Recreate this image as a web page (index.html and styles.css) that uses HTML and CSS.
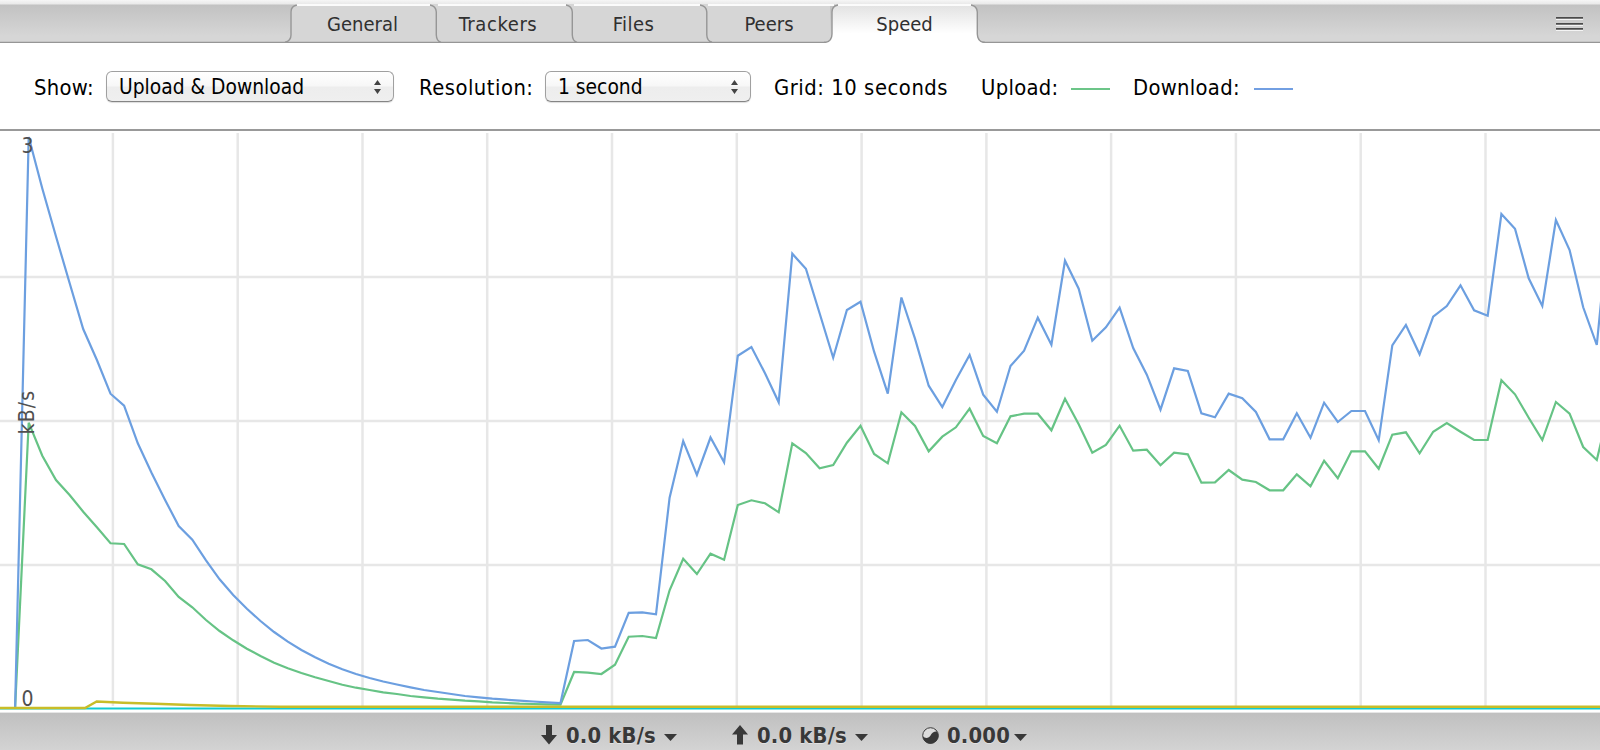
FILE: index.html
```html
<!DOCTYPE html>
<html>

<head>
    <meta charset="utf-8">
    <title>Speed</title>
    <link rel="stylesheet" href="styles.css">
</head>

<body>
    <div class="tab-bar">
        <svg class="tab-shapes" width="1600" height="43" viewBox="0 0 1600 43">
            <defs>
                <linearGradient id="activeTab" x1="0" y1="0" x2="0" y2="1">
                    <stop offset="0" stop-color="#e2e2e2" />
                    <stop offset="0.75" stop-color="#ffffff" />
                </linearGradient>
            </defs>
            <path class="tab-fill" d="M285 42 Q290.500 42 290.500 36 V12 Q290.500 5 298 5 H830 V42 Z" />
            <path class="tab-shine" d="M296 5 H430 M438 5 H566 M574 5 H700 M708 5 H834" />
            <path class="tab-line" d="M285 42.300 Q291 41 291 35 V12 Q291 6 297 5" />
            <path class="tab-line" d="M430 5 Q436 6 436.300 12 V35 Q436.500 41 441 42.300" />
            <path class="tab-line" d="M566 5 Q572 6 572.300 12 V35 Q572.500 41 577 42.300" />
            <path class="tab-line" d="M700 5 Q706.500 6 706.800 12 V35 Q707 41 712 42.300" />
            <path class="tab-line" d="M0 42.500 H825 M982 42.500 H1600" />
            <path fill="url(#activeTab)" d="M825 43 Q832 41.500 832 35 V12 Q832 5 839 5 H970 Q977 5 977 12 V35 Q977 41.500 984 43 Z" />
            <path class="tab-shine" d="M838 5 H971" />
            <path class="tab-line" d="M824 42.500 Q832 42 832 34 V12 Q832 6 838 5 M971 5 Q977 6 977.300 12 V34 Q977.500 42 985 42.500" />
        </svg>
        <div class="tabs">
            <div class="tab general">General</div>
            <div class="tab trackers">Trackers</div>
            <div class="tab files">Files</div>
            <div class="tab peers">Peers</div>
            <div class="tab speed">Speed</div>
        </div>
        <div class="menu-button">
            <span></span><span></span><span></span>
        </div>
    </div>

    <div class="controls">
        <label class="show">Show:</label>
        <div class="select show-select">
            <span>Upload &amp; Download</span>
            <svg width="9" height="14" viewBox="0 0 8 14"><path d="M4 0 L7.500 5 H0.500 Z M0.500 9 H7.500 L4 14 Z" /></svg>
        </div>
        <label class="resolution">Resolution:</label>
        <div class="select resolution-select">
            <span>1 second</span>
            <svg width="9" height="14" viewBox="0 0 8 14"><path d="M4 0 L7.500 5 H0.500 Z M0.500 9 H7.500 L4 14 Z" /></svg>
        </div>
        <label class="grid-label">Grid: 10 seconds</label>
        <label class="upload-label">Upload:</label>
        <div class="legend upload"></div>
        <label class="download-label">Download:</label>
        <div class="legend download"></div>
    </div>

    <div class="graph">
        <svg id="graph" width="1600" height="581" viewBox="0 131 1600 581">
            <g id="grid"></g>
            <polyline class="line upload-line" id="uploadLine" />
            <polyline class="line download-line" id="downloadLine" />
            <path class="overhead-down" d="M0 708.500 H1600" />
            <path class="overhead-up" d="M0 708 H85 L96.700 701.500 L123 702.700 L155 703.800 L190 705 L230 706 L280 706.700 H1600" />
            <text class="axis" x="21.500" y="153">3</text>
            <text class="axis" x="21.500" y="705.500">0</text>
            <text class="axis unit" transform="translate(33.500 434.500) rotate(-90)">kB/s</text>
        </svg>
    </div>

    <div class="status-bar">
        <svg class="arrow" width="16" height="20" viewBox="0 0 16 20"><path d="M5 0 H11 V10 H16 L8 19.500 L0 10 H5 Z" /></svg>
        <span class="rate">0.0 kB/s</span>
        <svg class="caret" width="13" height="7" viewBox="0 0 13 7"><path d="M0 0 H13 L6.500 7 Z" /></svg>

        <svg class="arrow second" width="16" height="20" viewBox="0 0 16 20"><path d="M8 0 L16 9.500 H11 V19.500 H5 V9.500 H0 Z" /></svg>
        <span class="rate">0.0 kB/s</span>
        <svg class="caret" width="13" height="7" viewBox="0 0 13 7"><path d="M0 0 H13 L6.500 7 Z" /></svg>

        <svg class="ratio-icon" width="17" height="17" viewBox="0 0 17 17">
            <circle cx="8.500" cy="8.500" r="7.800" fill="#dcdcdc" stroke="#3c3c3c" />
            <path d="M15 4.500 A7.800 7.800 0 1 1 0.800 9.500 C3 11.500 7 11.500 8.500 8.500 C10 5.500 12.500 4 15 4.500 Z" />
        </svg>
        <span class="ratio">0.000</span>
        <svg class="caret" width="13" height="7" viewBox="0 0 13 7"><path d="M0 0 H13 L6.500 7 Z" /></svg>
    </div>

    <script>
        // one sample per second
        var STEP = 13.636;
        var START = 15.06;

        var download = [
            708, 137, 188.5, 236.5, 283, 329, 360, 393.7, 405.7, 443.3, 472.5, 500, 526, 539.7, 560.3, 579.3, 595, 608.7, 621, 632,
            641.7, 650, 657.3, 663.7, 669.3, 674, 678, 681.5, 684.5, 687.3, 690, 692, 694, 696, 697.3, 698.7, 699.7, 700.7, 701.5, 702.3,
            703, 641, 640, 648.5, 646.7, 612.9, 612.3, 614.3, 497.7, 441, 475, 437.5, 462.3, 355.7, 347, 373.3, 402.3, 253.7, 268.7, 313.3,
            357.7, 310, 301.7, 351.7, 393.7, 297.5, 338.7, 385.7, 407, 380, 355, 394.7, 411.7, 366, 350.7, 317.7, 344.7, 260.7, 288.7, 340.7,
            327.3, 307.7, 348, 374.7, 409.7, 368.3, 371, 413.3, 417.3, 393.7, 398.3, 412, 439.3, 439.3, 413.3, 437.7, 402.7, 422, 411, 411,
            440.3, 345.3, 325, 354.3, 316.7, 306, 285.3, 310.3, 315.7, 214, 228.7, 278.3, 306, 220, 250, 307.3, 345, 205
        ];

        var upload = [
            708, 422.7, 455.7, 480, 495, 511.7, 527.3, 543.3, 544, 564.3, 569.3, 581, 597, 607.3, 620, 631, 640.3, 648.7, 656, 662.7,
            668.3, 673, 677.3, 681, 684.7, 687.7, 690, 692.3, 694, 696, 697.3, 698.7, 699.7, 700.7, 701.3, 702.3, 703, 703.7, 704, 704.3,
            704.7, 672, 672.7, 674, 664.7, 636.7, 636, 638, 590.3, 558.7, 574, 553.7, 559.7, 505, 500.3, 503.3, 512.3, 443.3, 453, 468.3,
            465, 442.7, 425.7, 454, 463.3, 412.3, 426, 451.3, 436.7, 427.3, 408.7, 436, 443.3, 416.3, 413.7, 413.7, 430.3, 398.7, 424.3, 452.7,
            445, 425.7, 450.7, 449.7, 465.3, 452.7, 454.3, 482.7, 482.3, 470, 479.7, 482, 490.3, 490.3, 474.3, 486.3, 460.7, 478.3, 451.3, 451.3,
            468.7, 434.7, 432.3, 453.3, 431.7, 423, 431.7, 440, 440, 380.3, 394.3, 417.7, 440, 402, 413.7, 447, 460, 402
        ];

        function drawLine(id, values) {
            var points = values.map(function (y, i) {
                return (START + i * STEP).toFixed(1) + "," + y;
            });
            document.getElementById(id).setAttribute("points", points.join(" "));
        }

        function drawGrid() {
            var d = "";
            for (var i = 0; i < 12; i++) {
                d += "M" + (112.9 + i * 124.78).toFixed(1) + " 133 V706 ";
            }
            d += "M0 277 H1600 M0 421 H1600 M0 565 H1600";
            var path = document.createElementNS("http://www.w3.org/2000/svg", "path");
            path.setAttribute("d", d);
            document.getElementById("grid").appendChild(path);
        }

        drawGrid();
        drawLine("uploadLine", upload);
        drawLine("downloadLine", download);
    </script>
</body>

</html>
```
FILE: styles.css
```css
* {
    box-sizing: border-box;
}

body {
    margin: 0;
    width: 1600px;
    height: 750px;
    overflow: hidden;
    background: #fff;
    font-family: "DejaVu Sans Condensed", "DejaVu Sans", sans-serif;
    font-stretch: condensed;
    font-size: 21.8px;
    color: #000;
}

.tab-bar {
    position: relative;
    display: flex;
    justify-content: space-between;
    height: 43px;
    background: linear-gradient(#f6f6f6 0, #e9e9e9 4px, #c2c2c2 5px, #d6d6d6 36px);
}

.tab-shapes {
    position: absolute;
    left: 0;
    top: 0;
}

.tab-fill {
    fill: #d6d6d6;
}

.tab-line {
    fill: none;
    stroke: #969696;
    stroke-width: 1.4;
}

.tab-shine {
    fill: none;
    stroke: #fbfbfb;
    stroke-width: 2;
}

.tabs {
    position: relative;
    display: flex;
    padding-left: 290px;
}

.tab {
    padding-top: 6px;
    font-size: 20px;
    line-height: 37px;
    text-align: center;
    color: #303030;
}

.general {
    width: 145px;
}

.trackers {
    width: 126px;
    letter-spacing: 0.6px;
}

.files {
    width: 145px;
    letter-spacing: 0.4px;
}

.peers {
    width: 126px;
}

.speed {
    width: 145px;
}

.menu-button {
    display: flex;
    flex-direction: column;
    gap: 3.500px;
    width: 27px;
    margin: 17px 17px 0 0;
}

.menu-button span {
    height: 2px;
    border-top: 1px solid #4a4a4a;
    border-bottom: 1px solid #777;
    box-shadow: 0 1px 0 #f4f4f4;
}

.controls {
    display: flex;
    align-items: center;
    height: 88px;
    padding-left: 34px;
    border-bottom: 2px solid #999;
    white-space: nowrap;
}

.controls label {
    padding-top: 3px;
    letter-spacing: 0.3px;
}

.show {
    width: 72px;
}

.resolution {
    width: 125px;
}

.controls .resolution {
    letter-spacing: 0.5px;
}

.grid-label {
    width: 207px;
}

.controls .grid-label {
    letter-spacing: 0.55px;
}

.upload-label {
    width: 90px;
}

.download-label {
    width: 121px;
}

.select {
    display: flex;
    align-items: center;
    justify-content: space-between;
    height: 31px;
    margin-top: 1px;
    padding: 1px 11px 0 12px;
    border: 1px solid #a0a0a0;
    border-bottom-color: #858585;
    border-radius: 6px;
    background: linear-gradient(#fff 0, #f7f7f7 48%, #ededed 52%, #efefef 100%);
    box-shadow: 0 1px 1px #ddd;
    font-size: 20.800px;
}

.select svg {
    fill: #444;
}

.show-select {
    width: 288px;
    margin-right: 25px;
}

.resolution-select {
    width: 206px;
    margin-left: 1px;
    margin-right: 23px;
}

.legend {
    width: 39px;
    height: 2px;
    margin-top: 5px;
}

.upload {
    margin-right: 23px;
    background: #6cc588;
}

.download {
    background: #729fe2;
}

.graph {
    height: 581px;
}

.graph svg {
    display: block;
}

#grid path {
    stroke: #e7e7e7;
    stroke-width: 2.500;
}

.line {
    fill: none;
    stroke-width: 2.2;
}

.upload-line {
    stroke: #66c385;
}

.download-line {
    stroke: #6c9fe0;
}

.overhead-down {
    fill: none;
    stroke: #10cbd0;
    stroke-width: 2;
}

.overhead-up {
    fill: none;
    stroke: #c8bd28;
    stroke-width: 2.4;
}

.axis {
    font-size: 21px;
    fill: #505050;
}

.unit {
    letter-spacing: 1.2px;
}

.status-bar {
    display: flex;
    align-items: center;
    height: 38px;
    padding: 7px 0 0 541px;
    border-top: 1px solid #e6e6e6;
    background: linear-gradient(#c0c0c0, #d3d3d3);
    font-weight: bold;
    font-size: 21.800px;
    letter-spacing: 0.2px;
    color: #383838;
    white-space: nowrap;
    text-shadow: 0 1px 0 #e2e2e2;
}

.status-bar svg {
    fill: #383838;
}

.rate {
    width: 98px;
    margin-left: 9px;
}

.caret {
    margin-top: 4px;
}

.second {
    margin-left: 55px;
}

.ratio-icon {
    margin-left: 54px;
}

.ratio {
    width: 67px;
    margin-left: 8px;
}
```
